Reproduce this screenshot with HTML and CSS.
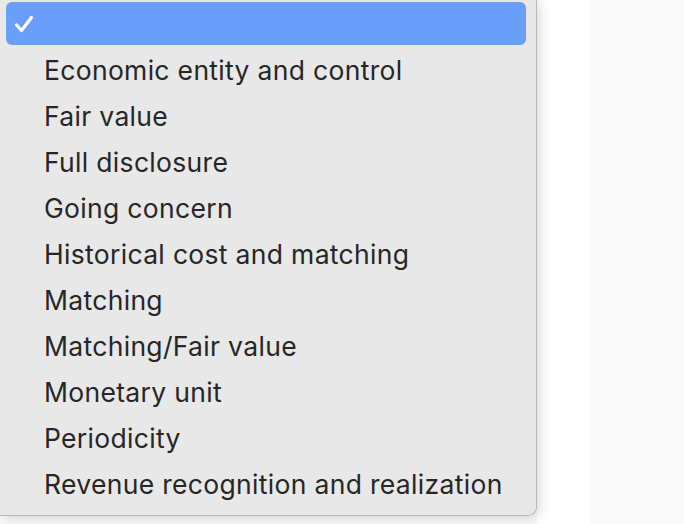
FILE: index.html
```html
<!DOCTYPE html>
<html>
<head>
<meta charset="utf-8">
<link rel="stylesheet" href="styles.css">
</head>
<body>
<div class="page">
  <div class="menu">
    <div class="item selected">
      <svg class="check" width="20" height="20" viewBox="0 0 20 20"><path d="M2.5 11 L7.5 16.5 L17.5 3.5" fill="none" stroke="#fff" stroke-width="3.2" stroke-linecap="round" stroke-linejoin="round"/></svg>
    </div>
    <div class="item">Economic entity and control</div>
    <div class="item">Fair value</div>
    <div class="item">Full disclosure</div>
    <div class="item">Going concern</div>
    <div class="item">Historical cost and matching</div>
    <div class="item">Matching</div>
    <div class="item">Matching/Fair value</div>
    <div class="item">Monetary unit</div>
    <div class="item">Periodicity</div>
    <div class="item">Revenue recognition and realization</div>
  </div>
  <div class="strip"></div>
  <div class="rest"></div>
</div>
</body>
</html>
```
FILE: styles.css
```css
html, body {
  margin: 0;
  padding: 0;
  background: #fafafa;
}
.page {
  display: flex;
  width: 684px;
  height: 524px;
  overflow: hidden;
}
.menu {
  position: relative;
  z-index: 2;
  flex: 0 0 537px;
  height: 516px;
  box-sizing: border-box;
  background: #e8e8e8;
  border-right: 1px solid #b9b9b9;
  border-bottom: 1px solid #b9b9b9;
  border-bottom-right-radius: 9px;
  padding: 1px 10px 9px 0;
  box-shadow: 2px 4px 14px rgba(0, 0, 0, 0.10), 4px 0 10px rgba(120, 140, 170, 0.10);
  font-family: Inter, "Liberation Sans", sans-serif;
  font-size: 26.5px;
  letter-spacing: 0.32px;
  color: #262626;
}
.item {
  height: 46px;
  display: flex;
  align-items: center;
  padding-left: 44px;
  padding-top: 2px;
  box-sizing: border-box;
}
.item.selected {
  margin: 1px 0 1px 6px;
  height: 43px;
  padding-left: 8px;
  padding-top: 0;
  background: #699ffa;
  border-radius: 6px;
}
.item.selected + .item {
  margin-top: 1px;
}
.check {
  display: block;
  margin-top: 1px;
}
.strip {
  flex: 0 0 54px;
  background: #ffffff;
}
.rest {
  flex: 1;
  background: #fafafa;
}
```
